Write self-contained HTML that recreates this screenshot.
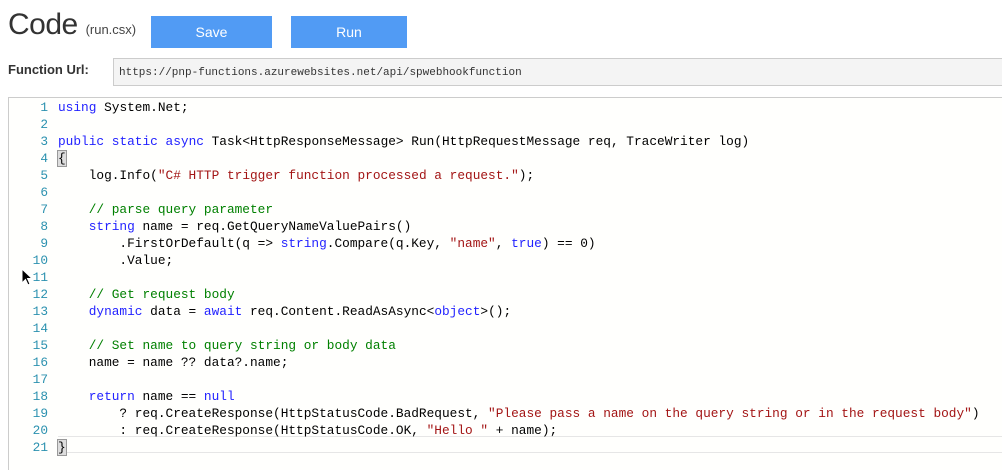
<!DOCTYPE html>
<html><head><meta charset="utf-8"><style>
body{margin:0;width:1002px;height:469px;overflow:hidden;background:#fff;position:relative;font-family:"Liberation Sans",sans-serif}
.t{position:absolute;left:8px;top:8px;font-size:30px;color:#333;letter-spacing:-0.5px}
.t small{font-size:13px;color:#444;letter-spacing:0}
.b{position:absolute;top:16px;height:32px;background:#519bf4;color:#fff;font-size:14px;text-align:center;line-height:32px}
.lab{position:absolute;left:8px;top:62px;font-weight:bold;font-size:13px;color:#333}
.url{position:absolute;left:113px;top:58px;width:900px;height:28px;background:#f4f4f4;border:1px solid #ccc;font-family:"Liberation Mono",monospace;font-size:11px;line-height:28px;padding-left:5px;color:#333;box-sizing:border-box}
.ed{position:absolute;left:8px;top:97px;width:1000px;height:372px;border-left:1px solid #ccc;border-top:1px solid #ccc;background:#fffffd}
.code{position:absolute;left:0;top:0;font-family:"Liberation Mono",monospace;font-size:12.8px;line-height:17px;color:#000}
.l{position:relative;height:17px;white-space:pre}
.n{display:inline-block;width:39px;text-align:right;color:#2b91af;margin-right:10px}
.k{color:#2222ff}.c{color:#008000}.s{color:#a31515}
.cur{position:absolute;left:49px;right:0;top:338px;height:17px;border-top:1px solid #e6e6e6;border-bottom:1px solid #e6e6e6;box-sizing:border-box}
.br{background:#ddd;outline:1px solid #999}
</style></head><body>
<div class="t">Code <small>(run.csx)</small></div>
<div class="b" style="left:151px;width:121px">Save</div>
<div class="b" style="left:291px;width:116px">Run</div>
<div class="lab">Function Url:</div>
<div class="url">https://pnp-functions.azurewebsites.net/api/spwebhookfunction</div>
<div class="ed"><div class="cur"></div><div class="code" style="top:1px"><div class="l"><span class="n">1</span><span class="k">using</span> System.Net;</div><div class="l"><span class="n">2</span></div><div class="l"><span class="n">3</span><span class="k">public</span> <span class="k">static</span> <span class="k">async</span> Task&lt;HttpResponseMessage&gt; Run(HttpRequestMessage req, TraceWriter log)</div><div class="l"><span class="n">4</span><span class="br">{</span></div><div class="l"><span class="n">5</span>    log.Info(<span class="s">"C# HTTP trigger function processed a request."</span>);</div><div class="l"><span class="n">6</span></div><div class="l"><span class="n">7</span>    <span class="c">// parse query parameter</span></div><div class="l"><span class="n">8</span>    <span class="k">string</span> name = req.GetQueryNameValuePairs()</div><div class="l"><span class="n">9</span>        .FirstOrDefault(q =&gt; <span class="k">string</span>.Compare(q.Key, <span class="s">"name"</span>, <span class="k">true</span>) == 0)</div><div class="l"><span class="n">10</span>        .Value;</div><div class="l"><span class="n">11</span></div><div class="l"><span class="n">12</span>    <span class="c">// Get request body</span></div><div class="l"><span class="n">13</span>    <span class="k">dynamic</span> data = <span class="k">await</span> req.Content.ReadAsAsync&lt;<span class="k">object</span>&gt;();</div><div class="l"><span class="n">14</span></div><div class="l"><span class="n">15</span>    <span class="c">// Set name to query string or body data</span></div><div class="l"><span class="n">16</span>    name = name ?? data?.name;</div><div class="l"><span class="n">17</span></div><div class="l"><span class="n">18</span>    <span class="k">return</span> name == <span class="k">null</span></div><div class="l"><span class="n">19</span>        ? req.CreateResponse(HttpStatusCode.BadRequest, <span class="s">"Please pass a name on the query string or in the request body"</span>)</div><div class="l"><span class="n">20</span>        : req.CreateResponse(HttpStatusCode.OK, <span class="s">"Hello "</span> + name);</div><div class="l"><span class="n">21</span><span class="br">}</span></div></div></div>
<svg style="position:absolute;left:21px;top:268px" width="12" height="18" viewBox="0 0 12 18"><path d="M1 1 L1 15 L4.5 11.5 L7 17 L9 16 L6.5 10.5 L11 10.5 Z" fill="#000" stroke="#fff" stroke-width="1"/></svg>
</body></html>
